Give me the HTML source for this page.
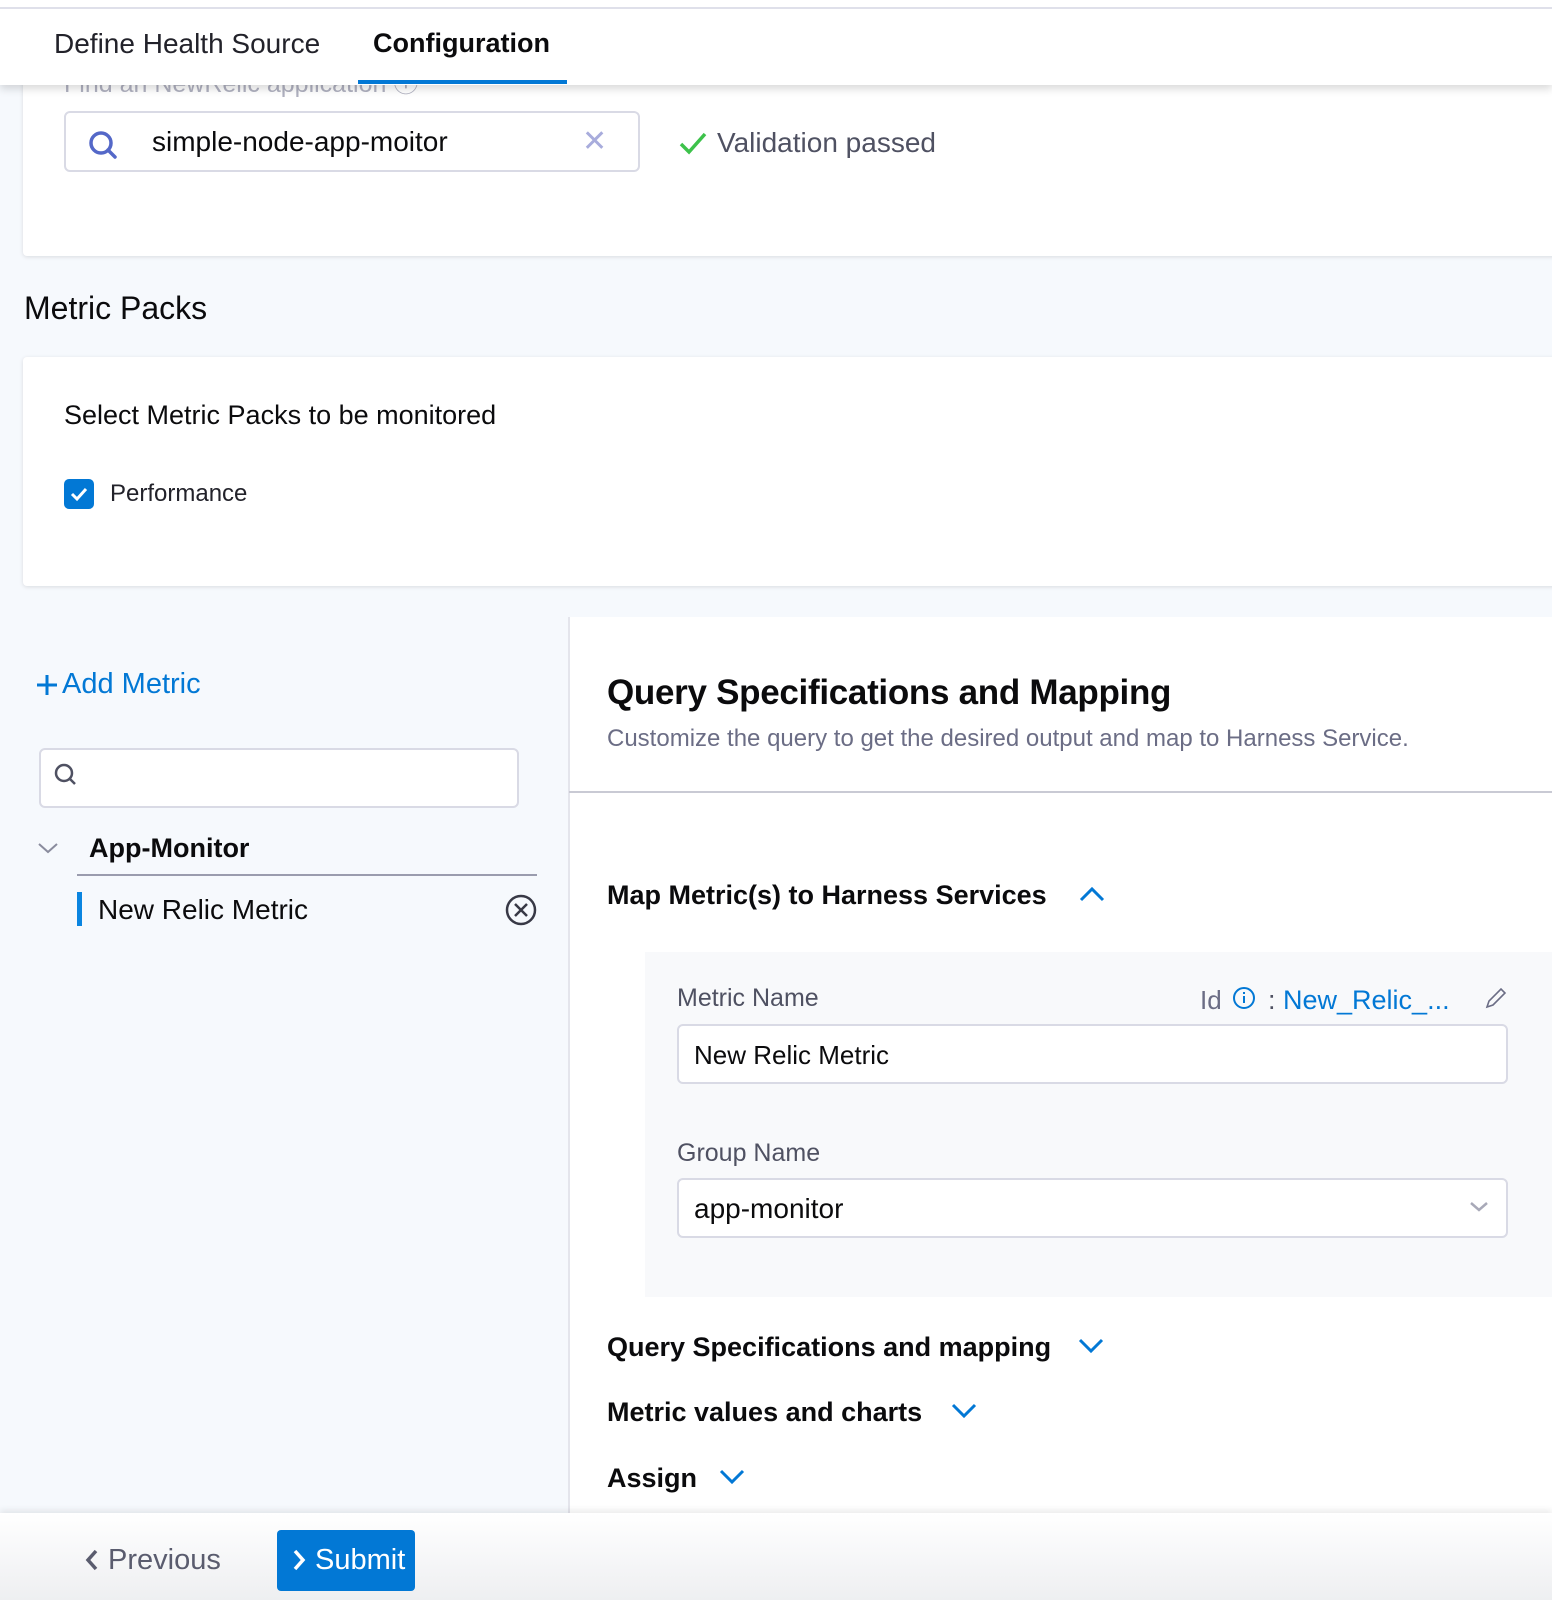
<!DOCTYPE html>
<html><head><meta charset="utf-8"><style>
*{margin:0;padding:0;box-sizing:border-box}
body{width:1552px;height:1600px;overflow:hidden;background:#f6f9fd;font-family:"Liberation Sans",sans-serif;position:relative;color:#0b0b0d}
.a{position:absolute;white-space:nowrap}
.card{position:absolute;background:#fff;box-shadow:0 1px 4px rgba(0,0,0,.12);border-radius:4px}
.inp{position:absolute;background:#fff;border:2px solid #d9dae5;border-radius:6px}
.h{font-weight:bold;font-size:27px;color:#0b0b0d}
</style></head><body>
<div class="card" style="left:23px;top:60px;width:1560px;height:196px"></div>
<div class="a" style="left:64px;top:64px;font-size:25px;color:#b0b1c0">Find an NewRelic application ⓘ</div>
<div class="inp" style="left:64px;top:111px;width:576px;height:61px"></div>
<svg class="a" style="left:86px;top:128px" width="34" height="34" viewBox="0 0 34 34"><circle cx="15" cy="15" r="10" fill="none" stroke="#5468c8" stroke-width="3.5"/><path d="M22 22l7 7" stroke="#5468c8" stroke-width="3.5" stroke-linecap="round"/></svg>
<div class="a" style="left:152px;top:126px;font-size:28px">simple-node-app-moitor</div>
<div class="a" style="left:582px;top:124px;font-size:30px;color:#a8acdc">✕</div>
<svg class="a" style="left:678px;top:130px" width="30" height="26"><path d="M3 14l8 8L27 4" fill="none" stroke="#3dc24b" stroke-width="3.5"/></svg>
<div class="a" style="left:717px;top:127px;font-size:28px;color:#4f5162">Validation passed</div>

<div style="position:absolute;left:0;top:0;width:1552px;height:85px;background:#fff;box-shadow:0 4px 8px rgba(0,0,0,.15)"></div>
<div class="a" style="left:0;top:7px;width:1552px;height:2px;background:#dfe0ea"></div>
<div class="a" style="left:54px;top:28px;font-size:28px;color:#22222a">Define Health Source</div>
<div class="a" style="left:373px;top:28px;font-size:27px;font-weight:bold">Configuration</div>
<div class="a" style="left:358px;top:80px;width:209px;height:4px;background:#0278d5"></div>

<div class="a" style="left:24px;top:290px;font-size:32px;color:#0b0b0d">Metric Packs</div>
<div class="card" style="left:23px;top:357px;width:1560px;height:229px"></div>
<div class="a" style="left:64px;top:400px;font-size:27px">Select Metric Packs to be monitored</div>
<div class="a" style="left:64px;top:479px;width:30px;height:30px;background:#0278d5;border-radius:5px"></div>
<svg class="a" style="left:64px;top:479px" width="30" height="30"><path d="M8 15l5 5 9-10" fill="none" stroke="#fff" stroke-width="3"/></svg>
<div class="a" style="left:110px;top:480px;font-size:24px;color:#22222a">Performance</div>

<div class="a" style="left:568px;top:617px;width:984px;height:900px;background:#fff;border-left:2px solid #e4e5ec"></div>
<svg class="a" style="left:35px;top:673px" width="24" height="24"><path d="M12 2v20M2 12h20" stroke="#0278d5" stroke-width="3"/></svg>
<div class="a" style="left:62px;top:668px;font-size:29px;color:#0278d5">Add Metric</div>
<div class="inp" style="left:39px;top:748px;width:480px;height:60px"></div>
<svg class="a" style="left:53px;top:762px" width="26" height="26"><circle cx="11" cy="11" r="8" fill="none" stroke="#4f5162" stroke-width="2.5"/><path d="M17 17l5 5" stroke="#4f5162" stroke-width="2.5"/></svg>
<svg class="a" style="left:36px;top:840px" width="24" height="16"><path d="M3 4l9 8 9-8" fill="none" stroke="#8a8c9e" stroke-width="2"/></svg>
<div class="a" style="left:89px;top:833px;font-size:27px;font-weight:bold;color:#0b0b0d">App-Monitor</div>
<div class="a" style="left:77px;top:874px;width:460px;height:2px;background:#9a9cae"></div>
<div class="a" style="left:77px;top:892px;width:5px;height:34px;background:#0a85e0"></div>
<div class="a" style="left:98px;top:894px;font-size:28px">New Relic Metric</div>
<svg class="a" style="left:504px;top:893px" width="34" height="34"><circle cx="17" cy="17" r="14" fill="none" stroke="#383946" stroke-width="2.5"/><path d="M11 11l12 12M23 11L11 23" stroke="#383946" stroke-width="2.5"/></svg>

<div class="a" style="left:607px;top:673px;font-size:35px;font-weight:bold;color:#0b0b0d;letter-spacing:-0.3px">Query Specifications and Mapping</div>
<div class="a" style="left:607px;top:725px;font-size:24px;color:#6b6d85">Customize the query to get the desired output and map to Harness Service.</div>
<div class="a" style="left:569px;top:791px;width:983px;height:2px;background:#c9cad4"></div>
<div class="a h" style="left:607px;top:880px">Map Metric(s) to Harness Services</div>
<svg class="a" style="left:1078px;top:885px" width="28" height="18"><path d="M3 15l11-11 11 11" fill="none" stroke="#0278d5" stroke-width="3"/></svg>
<div class="a" style="left:645px;top:952px;width:907px;height:345px;background:#f8f9fb"></div>
<div class="a" style="left:677px;top:984px;font-size:25px;color:#4f5162">Metric Name</div>
<div class="a" style="left:1200px;top:985px;font-size:26px;color:#6b6d85">Id</div>
<svg class="a" style="left:1232px;top:986px" width="26" height="26"><circle cx="12" cy="12" r="10" fill="none" stroke="#0278d5" stroke-width="2"/><path d="M12 10v7M12 6v2" stroke="#0278d5" stroke-width="2"/></svg>
<div class="a" style="left:1268px;top:985px;font-size:27px;color:#0278d5"><span style="color:#4f5162">:</span> New_Relic_...</div>
<svg class="a" style="left:1484px;top:986px" width="24" height="24"><path d="M3 21l2-6L17 3l4 4L9 19z" fill="none" stroke="#6b6d85" stroke-width="1.6"/></svg>
<div class="inp" style="left:677px;top:1024px;width:831px;height:60px"></div>
<div class="a" style="left:694px;top:1040px;font-size:26px">New Relic Metric</div>
<div class="a" style="left:677px;top:1139px;font-size:25px;color:#4f5162">Group Name</div>
<div class="inp" style="left:677px;top:1178px;width:831px;height:60px"></div>
<div class="a" style="left:694px;top:1193px;font-size:28px">app-monitor</div>
<svg class="a" style="left:1468px;top:1200px" width="22" height="14"><path d="M3 3l8 7 8-7" fill="none" stroke="#a8a9b8" stroke-width="2.5"/></svg>
<div class="a h" style="left:607px;top:1332px">Query Specifications and mapping</div>
<svg class="a" style="left:1077px;top:1336px" width="28" height="18"><path d="M3 4l11 11 11-11" fill="none" stroke="#0278d5" stroke-width="3"/></svg>
<div class="a h" style="left:607px;top:1397px">Metric values and charts</div>
<svg class="a" style="left:950px;top:1401px" width="28" height="18"><path d="M3 4l11 11 11-11" fill="none" stroke="#0278d5" stroke-width="3"/></svg>
<div class="a h" style="left:607px;top:1463px">Assign</div>
<svg class="a" style="left:718px;top:1467px" width="28" height="18"><path d="M3 4l11 11 11-11" fill="none" stroke="#0278d5" stroke-width="3"/></svg>

<div class="a" style="left:0;top:1513px;width:1552px;height:87px;background:linear-gradient(#fff,#eeeff1);box-shadow:0 -3px 6px rgba(0,0,0,.08)"></div>
<svg class="a" style="left:84px;top:1548px" width="16" height="24"><path d="M12 3l-8 9 8 9" fill="none" stroke="#5a5c6e" stroke-width="3.5"/></svg>
<div class="a" style="left:108px;top:1544px;font-size:29px;color:#5a5c6e">Previous</div>
<div class="a" style="left:277px;top:1530px;width:138px;height:61px;background:#0278d5;border-radius:4px"></div>
<svg class="a" style="left:291px;top:1548px" width="16" height="24"><path d="M4 3l8 9-8 9" fill="none" stroke="#fff" stroke-width="3.5"/></svg>
<div class="a" style="left:315px;top:1544px;font-size:29px;color:#fff">Submit</div>
</body></html>
